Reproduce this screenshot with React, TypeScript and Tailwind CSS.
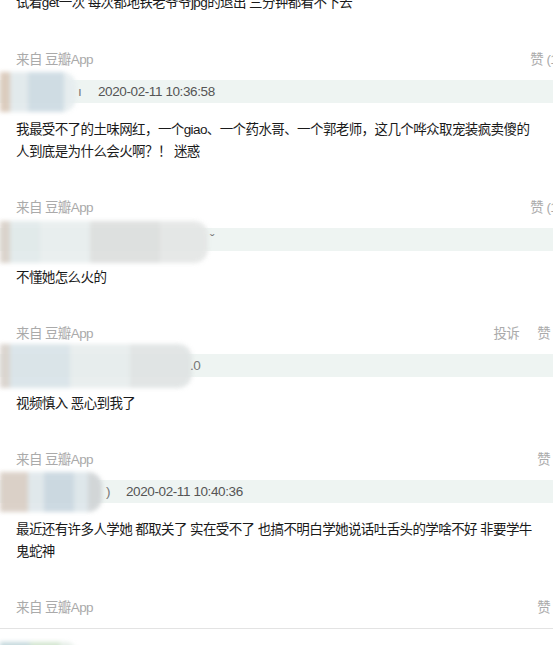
import React from "react"

type Strip = { w: number; c: string }

type Comment = {
    lines: string[]
    nameWidth: number
    tail?: string
    date?: string
    blob: { w: number; top: number; h: number; strips: Strip[] }
    actions: string[]
}

const comments: Comment[] = [
    {
        lines: [
            "我最受不了的土味网红，一个giao、一个药水哥、一个郭老师，这几个哗众取宠装疯卖傻的",
            "人到底是为什么会火啊？！ 迷惑",
        ],
        nameWidth: 80,
        tail: "ı",
        date: "2020-02-11 10:36:58",
        blob: {
            w: 76,
            top: -8,
            h: 40,
            strips: [
                { w: 10, c: "#d9c8b8" },
                { w: 18, c: "#e1e9ec" },
                { w: 36, c: "#ccdae2" },
                { w: 12, c: "#e6edef" },
            ],
        },
        actions: ["赞 (12)"],
    },
    {
        lines: ["不懂她怎么火的"],
        nameWidth: 212,
        tail: "ˇ",
        blob: {
            w: 208,
            top: -7,
            h: 42,
            strips: [
                { w: 10, c: "#d8d0c8" },
                { w: 30, c: "#e0e9ea" },
                { w: 50, c: "#e8eeee" },
                { w: 70, c: "#dcdedd" },
                { w: 48, c: "#e4e6e5" },
            ],
        },
        actions: ["投诉", "赞 (1)"],
    },
    {
        lines: ["视频慎入 恶心到我了"],
        nameWidth: 192,
        tail: ".0",
        blob: {
            w: 192,
            top: -10,
            h: 44,
            strips: [
                { w: 10, c: "#d8d2cc" },
                { w: 60, c: "#d8e3e8" },
                { w: 60, c: "#e7eded" },
                { w: 62, c: "#dfe3e3" },
            ],
        },
        actions: ["赞 (1)"],
    },
    {
        lines: [
            "最近还有许多人学她 都取关了 实在受不了 也搞不明白学她说话吐舌头的学啥不好 非要学牛",
            "鬼蛇神",
        ],
        nameWidth: 108,
        tail: ")",
        date: "2020-02-11 10:40:36",
        blob: {
            w: 102,
            top: -8,
            h: 40,
            strips: [
                { w: 28, c: "#d8cdc3" },
                { w: 16, c: "#dfe7eb" },
                { w: 30, c: "#c8d6df" },
                { w: 14, c: "#dde6ea" },
                { w: 14, c: "#cfd3d5" },
            ],
        },
        actions: ["赞 (1)"],
    },
]

function Blob({ blob }: { blob: Comment["blob"] }) {
    return (
        <div
            className="absolute left-0 flex blur-[2px] rounded-r-[14px] overflow-hidden opacity-90"
            style={{ top: blob.top, width: blob.w, height: blob.h }}
        >
            {blob.strips.map((s, i) => (
                <div key={i} style={{ width: s.w, background: s.c }} />
            ))}
        </div>
    )
}

function Footer({ actions }: { actions: string[] }) {
    return (
        <div className="flex items-center justify-between h-[20px] text-[#aaaaaa]">
            <span>来自 豆瓣App</span>
            <div className="flex gap-[18px]">
                {actions.map((a) => (
                    <span key={a}>{a}</span>
                ))}
            </div>
        </div>
    )
}

export default function App() {
    return (
        <div
            className="w-[553px] h-[645px] overflow-hidden bg-white"
            style={{ fontFamily: '"Liberation Sans", "Noto Sans CJK SC", sans-serif' }}
        >
            <div className="w-[584px] px-4 mt-[-8px] text-[13.5px] tracking-[-0.6px] leading-[22px]">
                <p className="text-[#1a1a1a]">试着get一次 每次都地铁老爷爷jpg的退出 三分钟都看不下去</p>

                <div className="mt-[36px]">
                    <Footer actions={["赞 (12)"]} />
                </div>

                {comments.map((c, i) => (
                    <div key={i}>
                        <div className="relative -mx-4 mt-[10px] h-[23px] bg-[#eef4f2] flex items-center">
                            <Blob blob={c.blob} />
                            <div className="relative flex items-center text-[13.5px] tracking-[-0.4px] text-[#555555]">
                                <span className="w-[0px]" style={{ marginLeft: c.nameWidth - 2 }} />
                                <span className="text-[#777777] w-[20px]">{c.tail}</span>
                                {c.date && <span>{c.date}</span>}
                            </div>
                        </div>
                        <div className="mt-[16px] text-[#1a1a1a] whitespace-nowrap">
                            {c.lines.map((l) => (
                                <p key={l}>{l}</p>
                            ))}
                        </div>
                        <div className="mt-[35px]">
                            <Footer actions={c.actions} />
                        </div>
                    </div>
                ))}

                <div className="-mx-4 mt-[10px] h-px bg-[#e3e3e3]" />
                <div className="relative -mx-4 h-[30px]">
                    <div className="absolute left-0 top-[13px] flex w-[76px] h-[16px] blur-[2px] rounded-tr-[10px] overflow-hidden">
                        <div className="w-[30px] bg-[#c6d9dd]" />
                        <div className="w-[30px] bg-[#d3e6d0]" />
                        <div className="w-[16px] bg-[#e7efe9]" />
                    </div>
                </div>
            </div>
        </div>
    )
}
